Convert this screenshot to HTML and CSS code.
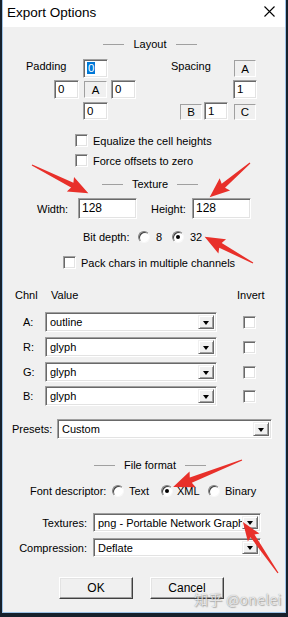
FILE: index.html
```html
<!DOCTYPE html>
<html>
<head>
<meta charset="utf-8">
<link rel="stylesheet" href="styles.css">
</head>
<body>
<div class="window">
  <div class="titlebar">
    <span class="title">Export Options</span>
    <svg class="close" width="11" height="11" viewBox="0 0 11 11"><path d="M0.5 0.5 L10.5 10.5 M10.5 0.5 L0.5 10.5" stroke="#000" stroke-width="1.1" fill="none"/></svg>
  </div>
  <div class="content">
    <div class="heading h-layout"><span class="hline"></span><span>Layout</span><span class="hline"></span></div>

    <div class="row r-l1">
      <span class="lbl w-pad">Padding</span>
      <span class="edit e25"><span class="sel">0</span></span>
      <span class="lbl w-spc m63">Spacing</span>
      <span class="static s22">A</span>
    </div>
    <div class="row r-l2">
      <span class="edit e25 m51">0</span>
      <span class="static s23 m5">A</span>
      <span class="edit e25 m4">0</span>
      <span class="edit e24 m97">1</span>
    </div>
    <div class="row r-l3">
      <span class="edit e25 h18 m80">0</span>
      <span class="static s22b m72">B</span>
      <span class="edit e24 h18 m2">1</span>
      <span class="static s22b m6">C</span>
    </div>

    <div class="row r-chk1"><span class="check m72"></span><span class="m5">Equalize the cell heights</span></div>
    <div class="row r-chk2"><span class="check m72"></span><span class="m5">Force offsets to zero</span></div>

    <div class="heading h-tex"><span class="hline"></span><span>Texture</span><span class="hline"></span></div>

    <div class="row r-wh">
      <span class="lbl w41 m34">Width:</span>
      <span class="edit e59">128</span>
      <span class="lbl w41 m14">Height:</span>
      <span class="edit e59">128</span>
    </div>
    <div class="row r-bit">
      <span class="lbl w55 m80">Bit depth:</span>
      <span class="radio"></span><span class="m6 w16">8</span>
      <span class="radio on"></span><span class="m6">32</span>
    </div>
    <div class="row r-pack"><span class="check m60"></span><span class="m5">Pack chars in multiple channels</span></div>

    <div class="row r-hdr">
      <span class="lbl w36 m12">Chnl</span>
      <span class="lbl w186">Value</span>
      <span>Invert</span>
    </div>
    <div class="row r-ch1">
      <span class="lbl w22 m20">A:</span>
      <span class="combo c172"><span class="ctext">outline</span><span class="cbtn"></span></span>
      <span class="check m26"></span>
    </div>
    <div class="row r-ch2">
      <span class="lbl w22 m20">R:</span>
      <span class="combo c172"><span class="ctext">glyph</span><span class="cbtn"></span></span>
      <span class="check m26"></span>
    </div>
    <div class="row r-ch3">
      <span class="lbl w22 m20">G:</span>
      <span class="combo c172"><span class="ctext">glyph</span><span class="cbtn"></span></span>
      <span class="check m26"></span>
    </div>
    <div class="row r-ch4">
      <span class="lbl w22 m20">B:</span>
      <span class="combo c172"><span class="ctext">glyph</span><span class="cbtn"></span></span>
      <span class="check m26"></span>
    </div>
    <div class="row r-pre">
      <span class="lbl w45 m9">Presets:</span>
      <span class="combo c215"><span class="ctext">Custom</span><span class="cbtn"></span></span>
    </div>

    <div class="heading h-ff"><span class="hline"></span><span>File format</span><span class="hline"></span></div>

    <div class="row r-fd">
      <span class="lbl w82 m27">Font descriptor:</span>
      <span class="radio"></span><span class="m5 w20">Text</span>
      <span class="radio on m12"></span><span class="m4 w21">XML</span>
      <span class="radio m10"></span><span class="m5">Binary</span>
    </div>
    <div class="row r-tx">
      <span class="rlbl">Textures:</span>
      <span class="combo c168"><span class="ctext">png - Portable Network Graphics</span><span class="cbtn"></span></span>
    </div>
    <div class="row r-cp">
      <span class="rlbl">Compression:</span>
      <span class="combo c168"><span class="ctext">Deflate</span><span class="cbtn"></span></span>
    </div>
    <div class="row r-btn">
      <span class="btn m56">OK</span>
      <span class="btn m17">Cancel</span>
    </div>
  </div>
</div>

<div class="watermark">知乎 @onelei</div>

<svg class="arrows" width="288" height="617" viewBox="0 0 288 617">
  <g fill="#e8302a">
    <polygon transform="translate(32,165) rotate(26.6)" points="0,-0.6 45,-2.6 43,-8 63,0 43,8 45,2.6 0,0.6"/>
    <polygon transform="translate(250,163) rotate(139.6)" points="0,-0.6 35,-2.6 33,-8 53,0 33,8 35,2.6 0,0.6"/>
    <polygon transform="translate(253,263) rotate(208.4)" points="0,-0.6 37,-2.6 35,-8 55,0 35,8 37,2.6 0,0.6"/>
    <polygon transform="translate(242,460) rotate(158.6)" points="0,-0.6 55,-2.8 53,-8.5 74,0 53,8.5 55,2.8 0,0.6"/>
    <polygon transform="translate(278,573) rotate(235.5)" points="0,-0.6 45,-2.4 43,-7 62,0 43,7 45,2.4 0,0.6"/>
  </g>
</svg>
</body>
</html>
```
FILE: styles.css
```css
html, body {
  margin: 0;
  padding: 0;
}
body {
  width: 288px;
  height: 617px;
  background: #16212c;
  position: relative;
  overflow: hidden;
  font-family: "Liberation Sans", Arial, sans-serif;
  font-size: 11px;
  color: #000;
}
.window {
  margin-left: 2px;
  width: 282px;
  height: 612px;
  border: 1px solid #9cc2e6;
  border-top: none;
  background: #f0f0f0;
  box-sizing: content-box;
}
.titlebar {
  height: 27px;
  background: #fff;
  display: flex;
  align-items: center;
  justify-content: space-between;
}
.title {
  font-size: 13.5px;
  margin-left: 4px;
  margin-top: -2px;
}
.close {
  margin-right: 10px;
  margin-top: -4px;
}
.content {
  display: flex;
  flex-direction: column;
}
.row {
  display: flex;
  align-items: center;
  white-space: nowrap;
}
.heading {
  display: flex;
  align-items: center;
  justify-content: center;
  gap: 9px;
  height: 14px;
  padding-left: 12px;
  color: #000;
}
.hline {
  width: 21px;
  height: 1px;
  background: #a0a0a0;
}
.h-layout { margin-top: 10px; }
.h-tex { margin-top: 10px; }
.h-ff { margin-top: 19px; }

.r-l1 { margin-top: 8px; height: 19px; }
.r-l2 { margin-top: 2px; height: 19px; }
.r-l3 { margin-top: 3px; height: 18px; }
.r-chk1 { margin-top: 14px; height: 13px; }
.r-chk2 { margin-top: 7px; height: 13px; }
.r-wh { margin-top: 7px; height: 21px; }
.r-bit { margin-top: 11px; height: 14px; }
.r-pack { margin-top: 12px; height: 13px; }
.r-hdr { margin-top: 19px; height: 14px; }
.r-ch1 { margin-top: 10px; height: 20px; }
.r-ch2 { margin-top: 5px; height: 20px; }
.r-ch3 { margin-top: 5px; height: 20px; }
.r-ch4 { margin-top: 4px; height: 20px; }
.r-pre { margin-top: 13px; height: 20px; }
.r-fd { margin-top: 12px; height: 14px; }
.r-tx { margin-top: 15px; height: 19px; }
.r-cp { margin-top: 6px; height: 19px; }
.r-btn { margin-top: 20px; height: 22px; }

.r-l1 .lbl { align-self: flex-start; margin-top: 1px; }

.lbl { display: inline-block; }
.w-pad { width: 57px; margin-left: 23px; }
.w-spc { width: 63px; }
.w16 { display: inline-block; width: 16px; }
.w20 { display: inline-block; width: 20px; }
.w21 { display: inline-block; width: 21px; }
.w22 { width: 22px; }
.w36 { width: 36px; }
.w41 { width: 41px; }
.w45 { width: 45px; }
.w55 { width: 55px; }
.w82 { width: 82px; }
.w186 { width: 186px; }

.m2 { margin-left: 2px; }
.m4 { margin-left: 4px; }
.m5 { margin-left: 5px; }
.m6 { margin-left: 6px; }
.m9 { margin-left: 9px; }
.m10 { margin-left: 10px; }
.m12 { margin-left: 12px; }
.m14 { margin-left: 14px; }
.m17 { margin-left: 17px; }
.m20 { margin-left: 20px; }
.m26 { margin-left: 26px; }
.m27 { margin-left: 27px; }
.m34 { margin-left: 34px; }
.m51 { margin-left: 51px; }
.m56 { margin-left: 56px; }
.m60 { margin-left: 60px; }
.m63 { margin-left: 63px; }
.m72 { margin-left: 72px; }
.m80 { margin-left: 80px; }
.m97 { margin-left: 97px; }

.edit {
  box-sizing: border-box;
  height: 19px;
  background: #fff;
  border: 1px solid;
  border-color: #a0a0a0 #fff #fff #a0a0a0;
  box-shadow: inset 1px 1px 0 #696969, inset -1px -1px 0 #e3e3e3;
  padding: 2px 0 0 3px;
  font-size: 11.5px;
  line-height: 13px;
  display: inline-block;
}
.h18 { height: 18px; }
.e24 { width: 24px; }
.e25 { width: 25px; }
.e59 { width: 59px; height: 21px; padding-top: 3px; font-size: 12px; }
.sel {
  background: #0078d7;
  color: #fff;
  padding: 0 1px;
}

.static {
  box-sizing: border-box;
  display: inline-flex;
  align-items: center;
  justify-content: center;
  height: 17px;
  border: 1px solid;
  border-color: #a0a0a0 #fff #fff #a0a0a0;
  background: #f0f0f0;
  font-size: 11.5px;
}
.s22 { width: 22px; align-self: flex-start; margin-top: 1px; }
.s23 { width: 23px; height: 17px; }
.s22b { width: 22px; height: 16px; align-self: flex-end; }

.check {
  box-sizing: border-box;
  width: 13px;
  height: 13px;
  background: #fff;
  border: 1px solid;
  border-color: #a0a0a0 #fff #fff #a0a0a0;
  box-shadow: inset 1px 1px 0 #696969, inset -1px -1px 0 #e3e3e3;
  display: inline-block;
  flex: none;
}

.radio {
  box-sizing: border-box;
  width: 12px;
  height: 12px;
  border-radius: 50%;
  background: #fff;
  border: 1px solid;
  border-color: #808080 #f8f8f8 #f8f8f8 #808080;
  box-shadow: inset 1px 1px 0 #404040;
  display: inline-flex;
  align-items: center;
  justify-content: center;
  flex: none;
}
.radio.on::after {
  content: "";
  width: 4px;
  height: 4px;
  border-radius: 50%;
  background: #000;
}

.combo {
  box-sizing: border-box;
  height: 100%;
  background: #fff;
  border: 1px solid;
  border-color: #a0a0a0 #fff #fff #a0a0a0;
  box-shadow: inset 1px 1px 0 #696969, inset -1px -1px 0 #e3e3e3;
  display: flex;
  align-items: stretch;
  padding: 2px 2px 2px 2px;
  overflow: hidden;
}
.c168 { width: 168px; }
.c172 { width: 172px; }
.c215 { width: 215px; }
.ctext {
  flex: 1;
  overflow: hidden;
  padding-left: 2px;
  font-size: 11px;
  line-height: 14px;
  white-space: nowrap;
}
.cbtn {
  box-sizing: border-box;
  width: 16px;
  flex: none;
  background: #f0f0f0;
  border: 1px solid;
  border-color: #f0f0f0 #696969 #696969 #f0f0f0;
  box-shadow: inset 1px 1px 0 #fff, inset -1px -1px 0 #a0a0a0;
  display: flex;
  align-items: center;
  justify-content: center;
}
.cbtn::after {
  content: "";
  width: 0;
  height: 0;
  border-left: 3.5px solid transparent;
  border-right: 3.5px solid transparent;
  border-top: 4px solid #000;
  margin-top: 1px;
}

.rlbl {
  width: 90px;
  box-sizing: border-box;
  text-align: right;
  padding-right: 6px;
  display: inline-block;
}

.btn {
  box-sizing: border-box;
  width: 74px;
  height: 22px;
  background: #f0f0f0;
  border: 1px solid;
  border-color: #fff #404040 #404040 #fff;
  box-shadow: inset -1px -1px 0 #a0a0a0, inset 1px 1px 0 #e3e3e3;
  display: inline-flex;
  align-items: center;
  justify-content: center;
  font-size: 12px;
}

.watermark {
  position: absolute;
  left: 194px;
  top: 589px;
  font-family: "Noto Sans CJK SC", "Liberation Sans", sans-serif;
  font-size: 14px;
  color: rgba(255, 255, 255, 0.75);
  text-shadow: 0 0 1px rgba(80, 80, 80, 0.6), 1px 1px 1px rgba(90, 90, 90, 0.4);
  letter-spacing: 0.3px;
}

.arrows {
  position: absolute;
  left: 0;
  top: 0;
  pointer-events: none;
}
```
